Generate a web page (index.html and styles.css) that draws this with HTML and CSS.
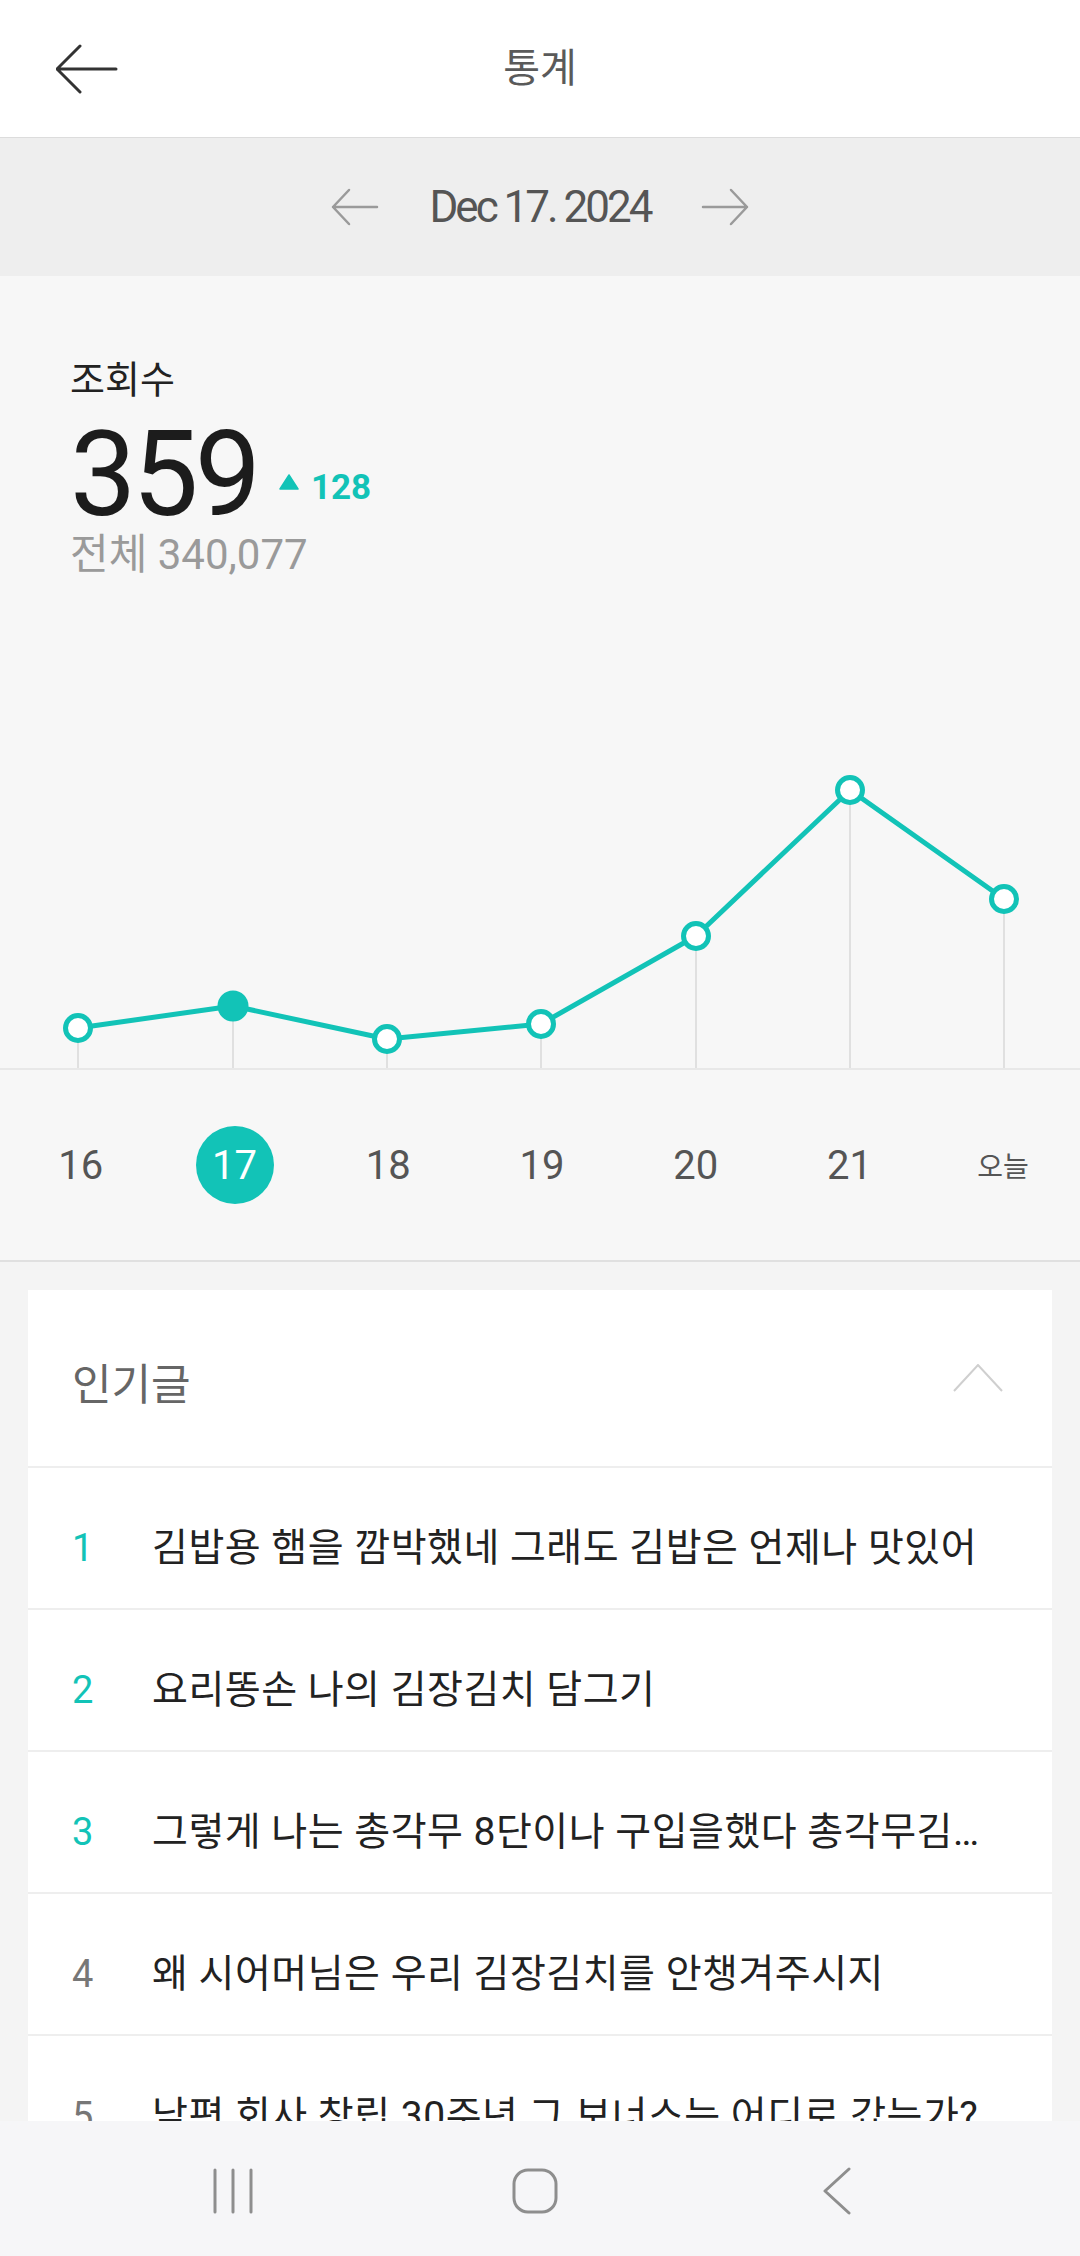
FILE: index.html
```html
<!DOCTYPE html>
<html lang="ko">
<head>
<meta charset="utf-8">
<title>통계</title>
<link rel="stylesheet" href="styles.css">
</head>
<body>
<div class="app">
  <div class="main">
    <header class="topbar">
      <div class="back">
        <svg width="62" height="50" viewBox="0 0 62 50"><path d="M1 25 H60 M24 2 L1 25 L24 48" fill="none" stroke="#333" stroke-width="3" stroke-linecap="round" stroke-linejoin="round"/></svg>
      </div>
      <h1 class="title">통계</h1>
      <div></div>
    </header>
    <div class="datebar">
      <svg width="48" height="38" viewBox="0 0 48 38"><path d="M2 19 H46 M18 2 L2 19 L18 36" fill="none" stroke="#9a9a9a" stroke-width="2.5" stroke-linecap="round" stroke-linejoin="round"/></svg>
      <span class="date">Dec 17. 2024</span>
      <svg width="48" height="38" viewBox="0 0 48 38"><path d="M2 19 H46 M30 2 L46 19 L30 36" fill="none" stroke="#9a9a9a" stroke-width="2.5" stroke-linecap="round" stroke-linejoin="round"/></svg>
    </div>
    <section class="stats">
      <div class="summary">
        <div class="label">조회수</div>
        <div class="value"><span class="count">359</span><span class="delta"><svg class="up" width="20" height="16" viewBox="0 0 20 16"><path d="M10 1 L19 15 H1 Z" fill="#12c3b7" stroke="#12c3b7" stroke-width="1.5" stroke-linejoin="round"/></svg><span class="delta-num">128</span></span></div>
        <div class="total">전체 340,077</div>
      </div>
      <svg class="chart" width="1080" height="490" viewBox="0 0 1080 490">
        <line x1="0" y1="489" x2="1080" y2="489" stroke="#e8e8e8" stroke-width="2"/>
        <g stroke="#e0e0e0" stroke-width="2">
          <line x1="78" y1="448" x2="78" y2="488"/>
          <line x1="233" y1="426" x2="233" y2="488"/>
          <line x1="387" y1="459" x2="387" y2="488"/>
          <line x1="541" y1="444" x2="541" y2="488"/>
          <line x1="696" y1="356" x2="696" y2="488"/>
          <line x1="850" y1="210" x2="850" y2="488"/>
          <line x1="1004" y1="319" x2="1004" y2="488"/>
        </g>
        <polyline points="78,448 233,426 387,459 541,444 696,356 850,210 1004,319" fill="none" stroke="#12c3b7" stroke-width="5" stroke-linejoin="round"/>
        <g fill="#ffffff" stroke="#12c3b7" stroke-width="5">
          <circle cx="78" cy="448" r="12.5"/>
          <circle cx="387" cy="459" r="12.5"/>
          <circle cx="541" cy="444" r="12.5"/>
          <circle cx="696" cy="356" r="12.5"/>
          <circle cx="850" cy="210" r="12.5"/>
          <circle cx="1004" cy="319" r="12.5"/>
        </g>
        <circle cx="233" cy="426" r="15.5" fill="#12c3b7"/>
      </svg>
      <div class="days">
        <span class="day">16</span>
        <span class="day active">17</span>
        <span class="day">18</span>
        <span class="day">19</span>
        <span class="day">20</span>
        <span class="day">21</span>
        <span class="day today">오늘</span>
      </div>
    </section>
    <section class="popular">
      <div class="card">
        <div class="card-head">
          <h2 class="card-title">인기글</h2>
          <svg width="50" height="28" viewBox="0 0 50 28"><path d="M1 27 L25 1 L49 27" fill="none" stroke="#cfcfcf" stroke-width="2"/></svg>
        </div>
        <ol class="posts">
          <li class="post"><span class="rank hot">1</span><span class="post-title">김밥용 햄을 깜박했네 그래도 김밥은 언제나 맛있어</span></li>
          <li class="post"><span class="rank hot">2</span><span class="post-title">요리똥손 나의 김장김치 담그기</span></li>
          <li class="post"><span class="rank hot">3</span><span class="post-title">그렇게 나는 총각무 8단이나 구입을했다 총각무김치 담그기</span></li>
          <li class="post"><span class="rank">4</span><span class="post-title">왜 시어머님은 우리 김장김치를 안챙겨주시지</span></li>
          <li class="post"><span class="rank">5</span><span class="post-title">남편 회사 창립 30주년 그 보너스는 어디로 갔는가?</span></li>
        </ol>
      </div>
    </section>
  </div>
  <nav class="navbar">
    <div class="nav-item">
      <svg width="44" height="46" viewBox="0 0 44 46"><path d="M4 2 V44 M22 2 V44 M40 2 V44" stroke="#8e8e8e" stroke-width="3" stroke-linecap="round"/></svg>
    </div>
    <div class="nav-item">
      <svg width="46" height="46" viewBox="0 0 46 46"><rect x="2" y="2" width="42" height="42" rx="14" fill="none" stroke="#8e8e8e" stroke-width="3"/></svg>
    </div>
    <div class="nav-item">
      <svg width="30" height="48" viewBox="0 0 30 48"><path d="M27 2 L3 24 L27 46" fill="none" stroke="#8e8e8e" stroke-width="3" stroke-linecap="round" stroke-linejoin="round"/></svg>
    </div>
  </nav>
</div>
</body>
</html>
```
FILE: styles.css
```css
* {
  box-sizing: border-box;
}

html, body {
  margin: 0;
  padding: 0;
}

body {
  width: 1080px;
  height: 2256px;
  overflow: hidden;
  font-family: Roboto, "Noto Sans CJK KR", sans-serif;
  color: #222;
  background: #f4f4f4;
}

.app {
  display: flex;
  flex-direction: column;
  height: 2256px;
}

.main {
  flex: 1;
  overflow: hidden;
  min-height: 0;
}

/* top bar */
.topbar {
  height: 138px;
  background: #fff;
  border-bottom: 1px solid #dcdcdc;
  display: grid;
  grid-template-columns: 1fr auto 1fr;
  align-items: center;
}

.back {
  padding-left: 56px;
  display: flex;
  align-items: center;
}

.back svg {
  display: block;
}

.title {
  margin: 0;
  font-size: 40px;
  font-weight: 400;
  color: #5a5a5a;
  line-height: 50px;
}

/* date bar */
.datebar {
  height: 138px;
  background: #eeeeee;
  display: flex;
  align-items: center;
  justify-content: center;
  gap: 50px;
}

.datebar svg {
  display: block;
}

.date {
  font-size: 44px;
  letter-spacing: -3px;
  color: #555;
  line-height: 50px;
}

/* stats */
.stats {
  background: #f7f7f7;
  border-bottom: 2px solid #e0e0e0;
}

.summary {
  padding: 79px 70px 0;
}

.label {
  font-size: 38px;
  line-height: 50px;
  color: #222;
}

.value {
  margin-top: 20px;
  line-height: 100px;
  height: 100px;
}

.count {
  font-size: 118px;
  letter-spacing: -4px;
  color: #1c1c1c;
  vertical-align: baseline;
}

.delta {
  margin-left: 22px;
  vertical-align: 16px;
  color: #12c3b7;
  font-size: 35px;
  font-weight: 700;
}

.up {
  vertical-align: 9px;
  margin-right: 12px;
}

.delta-num {
  vertical-align: baseline;
}

.total {
  margin-top: 5px;
  font-size: 42px;
  line-height: 50px;
  color: #9a9a9a;
}

.chart {
  display: block;
}

.days {
  height: 190px;
  display: grid;
  grid-template-columns: repeat(7, 1fr);
  align-items: center;
  justify-items: center;
  padding-left: 4px;
}

.day {
  width: 78px;
  height: 78px;
  border-radius: 50%;
  display: flex;
  align-items: center;
  justify-content: center;
  font-size: 40px;
  color: #555;
}

.day.active {
  background: #12c3b7;
  color: #fff;
}

.day.today {
  font-size: 28px;
}

/* popular posts */
.popular {
  padding: 28px 28px 0;
}

.card {
  background: #fff;
}

.card-head {
  height: 178px;
  border-bottom: 2px solid #eeeeee;
  display: flex;
  align-items: center;
  justify-content: space-between;
  padding: 0 49px 0 44px;
}

.card-title {
  margin: 14px 0 0;
  font-size: 43px;
  font-weight: 400;
  color: #666;
  line-height: 50px;
}

.card-head svg {
  display: block;
}

.posts {
  list-style: none;
  margin: 0;
  padding: 0;
}

.post {
  height: 142px;
  border-bottom: 2px solid #eeeeee;
  display: flex;
  align-items: center;
  padding: 20px 60px 0 44px;
}

.rank {
  flex: 0 0 80px;
  font-size: 38px;
  color: #777;
  line-height: 50px;
}

.rank.hot {
  color: #12c3b7;
}

.post-title {
  flex: 1;
  min-width: 0;
  font-size: 39px;
  letter-spacing: 0.5px;
  line-height: 52px;
  color: #222;
  white-space: nowrap;
  overflow: hidden;
  text-overflow: ellipsis;
}

/* system nav bar */
.navbar {
  height: 135px;
  flex: 0 0 135px;
  background: #f6f6f8;
  display: flex;
  align-items: center;
  justify-content: center;
  gap: 202px;
  padding: 5px 10px 0 0;
}

.nav-item {
  width: 100px;
  display: flex;
  justify-content: center;
  align-items: center;
}

.nav-item svg {
  display: block;
}
```
